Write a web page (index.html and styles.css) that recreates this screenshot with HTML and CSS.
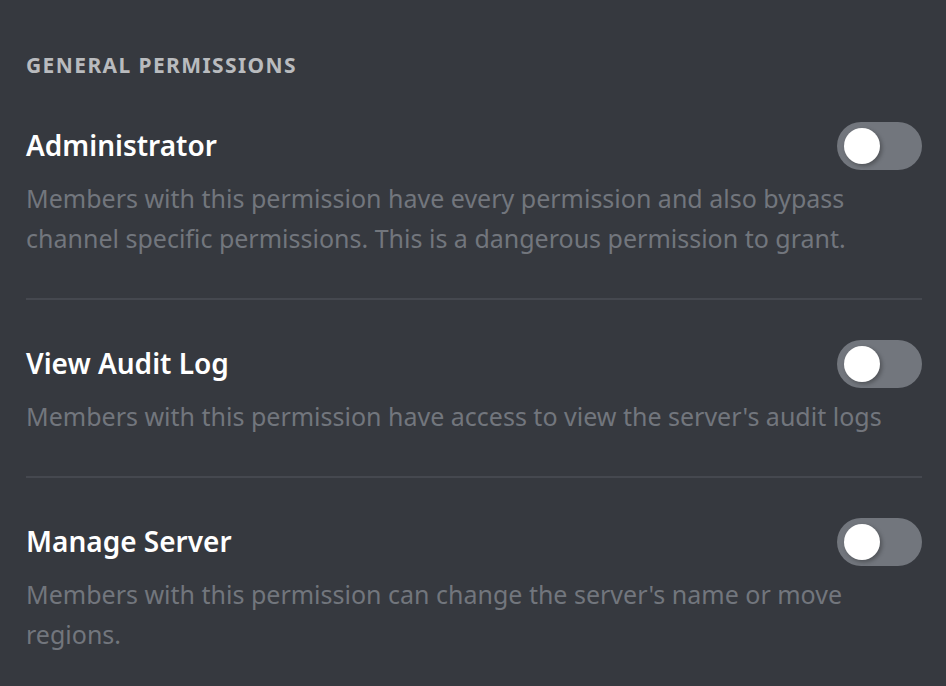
FILE: index.html
```html
<!DOCTYPE html>
<html lang="en">
<head>
    <meta charset="UTF-8">
    <title>General Permissions</title>
    <link rel="stylesheet" href="styles.css">
</head>
<body>
    <div class="wrap">
        <h2 class="section-title">General Permissions</h2>
        <ul class="perm-list">
            <li class="perm">
                <div class="perm-head">
                    <span class="perm-name">Administrator</span>
                    <span class="switch"><span class="knob"></span></span>
                </div>
                <p class="perm-desc">Members with this permission have every permission and also bypass channel specific permissions. This is a dangerous permission to grant.</p>
            </li>
            <li class="perm">
                <div class="perm-head">
                    <span class="perm-name">View Audit Log</span>
                    <span class="switch"><span class="knob"></span></span>
                </div>
                <p class="perm-desc">Members with this permission have access to view the server's audit logs</p>
            </li>
            <li class="perm">
                <div class="perm-head">
                    <span class="perm-name">Manage Server</span>
                    <span class="switch"><span class="knob"></span></span>
                </div>
                <p class="perm-desc">Members with this permission can change the server's name or move regions.</p>
            </li>
        </ul>
    </div>
</body>
</html>
```

FILE: styles.css
```css
*{
    margin: 0;
    padding: 0;
    list-style-type: none;
    box-sizing: border-box;
}
html,body{
    background-color: #36393f;
}
body{
    font-family: "Noto Sans", "Open Sans", sans-serif;
}
.wrap{
    padding: 53px 24px 0 26px;
}
.section-title{
    height: 24px;
    color: #b9bbbe;
    font-size: 21px;
    font-weight: 700;
    line-height: 24px;
    text-transform: uppercase;
    letter-spacing: 1.4px;
}
.perm-list{
    margin-top: 45px;
}
.perm{
    padding-bottom: 40px;
    margin-bottom: 40px;
    border-bottom: 2px solid #45484f;
}
.perm:last-child{
    padding-bottom: 0;
    margin-bottom: 0;
    border-bottom: none;
}
.perm-head{
    display: flex;
    height: 48px;
    align-items: center;
    justify-content: space-between;
}
.perm-name{
    margin-top: -3px;
    color: #fff;
    font-size: 28px;
    font-weight: 600;
}
.perm-desc{
    margin-top: 8px;
    color: #72767d;
    font-size: 25px;
    line-height: 40px;
}
.switch{
    display: flex;
    width: 85px;
    height: 48px;
    padding: 6px 7px;
    border-radius: 24px;
    background-color: #72767d;
}
.knob{
    width: 36px;
    height: 36px;
    border-radius: 50%;
    background-color: #fff;
    box-shadow: 2px 2px 4px rgba(0,0,0,.3);
}
```
